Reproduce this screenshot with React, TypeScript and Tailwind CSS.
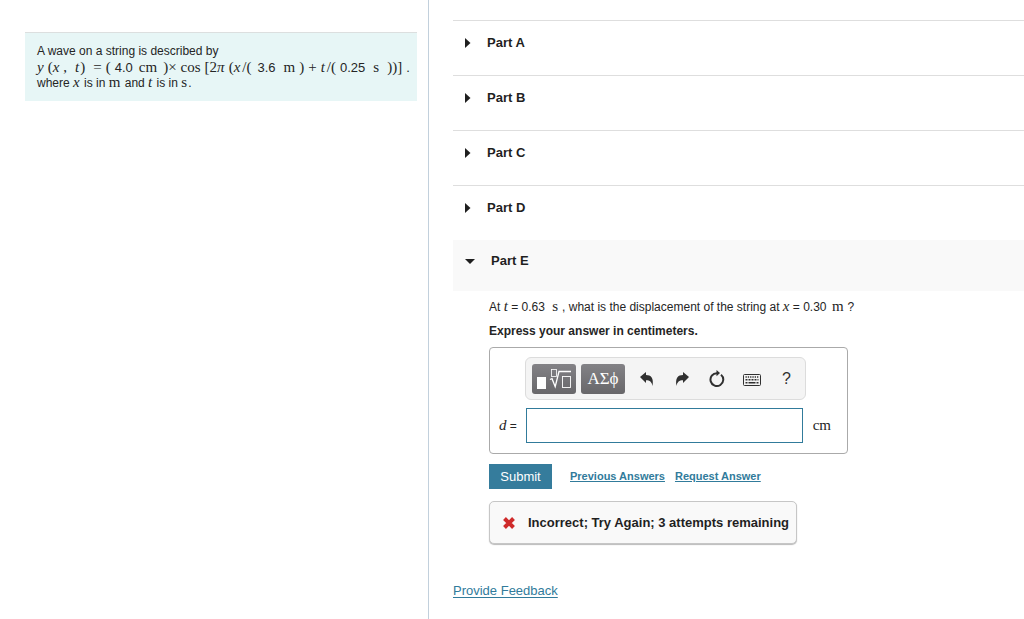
import React, { useState } from "react";

const serif = "font-['Liberation_Serif',serif] text-[15px] leading-none";

function M({ children, i = false, className = "" }: { children: React.ReactNode; i?: boolean; className?: string }) {
  return <span className={`${serif} ${i ? "italic" : ""} ${className}`}>{children}</span>;
}

function Problem() {
  return (
    <section className="border-t border-[#dcdfdf] bg-[#e7f6f6] px-3 pt-[11px] pb-3 text-[12px] text-[#252525]">
      <p className="leading-[14px]">A wave on a string is described by</p>
      <p className="h-[17px] text-[13px] leading-[19px] whitespace-nowrap">
        <M i className="mr-1">y</M>
        <M>(</M>
        <M i>x</M>
        <M className="mx-1">,</M>
        <M i className="ml-1">t</M>
        <M className="ml-px">)</M>
        <M className="mr-1 ml-2">=</M>
        <M>(</M>
        <span className="mx-1">4.0</span>
        <M className="mx-0.5">cm</M>
        <M className="ml-1">)</M>
        <M className="mr-1">×</M>
        <M className="mr-1">cos</M>
        <M>[2</M>
        <M i className="mr-1">π</M>
        <M>(</M>
        <M i>x</M>
        <M className="mx-0.5">/(</M>
        <span className="mx-1">3.6</span>
        <M className="mx-1">m</M>
        <M>)</M>
        <M className="mx-1">+</M>
        <M i>t</M>
        <M className="ml-0.5">/(</M>
        <span className="mx-1">0.25</span>
        <M className="mx-1">s</M>
        <M className="ml-1">))]</M>
        <span className="ml-1">.</span>
      </p>
      <p className="h-[14px] leading-[14px] whitespace-nowrap">
        where <M i className="mr-px">x</M> is in <M className="mr-px">m</M> and <M i className="mr-px">t</M> is in <M className="mr-px">s</M>.
      </p>
    </section>
  );
}

function PartRow({ name }: { name: string }) {
  return (
    <h2 className="h-[55px] border-t border-[#dedede]">
      <button type="button" aria-expanded="false" className="flex h-[43px] w-full items-center pl-3 text-left text-[13px] font-bold text-[#1f1f1f]">
        <svg aria-hidden="true" width="6" height="10" viewBox="0 0 6 10" className="mr-4 fill-[#1f1f1f]">
          <path d="M0 0l5.500 5L0 10z" />
        </svg>
        {name}
      </button>
    </h2>
  );
}

function TemplateIcon() {
  return (
    <svg aria-hidden="true" width="36" height="22" viewBox="0 0 36 22" fill="none" stroke="#fff">
      <rect x="1" y="9" width="9" height="12" fill="#fff" stroke="none" />
      <rect x="15.500" y="1.500" width="5" height="7" strokeWidth=".8" />
      <path d="M14 11.500l2-.8 3.200 8L23 3.500h12" strokeWidth="1.300" />
      <rect x="26.500" y="8.500" width="8" height="11" strokeWidth=".9" />
    </svg>
  );
}

function UndoIcon({ flip = false }: { flip?: boolean }) {
  return (
    <svg aria-hidden="true" width="14" height="14" viewBox="0 0 14 14" className={flip ? "-scale-x-100 fill-[#303030]" : "fill-[#303030]"}>
      <path d="M0 5L6 0v3C11 3 14 6 12.500 14c-.9-4-2.500-5.700-6.500-5.700V11z" />
    </svg>
  );
}

function ResetIcon() {
  return (
    <svg aria-hidden="true" width="16" height="18" viewBox="0 0 16 18">
      <path d="M12 4.700A6.400 6.400 0 1 1 8 3.200" fill="none" stroke="#303030" strokeWidth="2" />
      <path d="M7.500 0l3.500 3-3.500 3.200z" fill="#303030" />
    </svg>
  );
}

function KeyboardIcon() {
  return (
    <svg aria-hidden="true" width="18" height="12" viewBox="0 0 18 12" fill="none" stroke="#303030">
      <rect x=".5" y=".5" width="17" height="11" rx="1" />
      <path d="M2.500 3h13" strokeDasharray="1.300 1" strokeWidth="1.500" />
      <path d="M2.500 5.800h13" strokeDasharray="2 1" strokeWidth="1.500" />
      <path d="M2.500 8.800h2m1 0h7m1 0h2" strokeWidth="1.500" />
    </svg>
  );
}

const darkButton =
  "flex h-[30px] w-11 items-center justify-center rounded-[3px] bg-linear-to-b from-[#838286] to-[#68676a] text-white";
const toolButton = "flex h-[30px] w-[35px] items-center justify-center";

function AnswerBox() {
  const [value, setValue] = useState("");
  return (
    <div className="w-[359px] max-w-full rounded-[4px] border border-[#aaa] pt-[9px] pr-4 pb-[10px] pl-[9px]">
      <div role="toolbar" aria-label="Math tools" className="ml-[26px] flex h-[43px] w-[281px] items-center rounded-md border border-[#dcdcdc] bg-[#f4f4f4] pl-[6px]">
        <button type="button" aria-label="Templates" className={darkButton}><TemplateIcon /></button>
        <button type="button" aria-label="Symbols" className={`${darkButton} mr-1 ml-[5px] font-['Liberation_Serif',serif] text-[17px]`}>ΑΣϕ</button>
        <button type="button" aria-label="Undo" className={toolButton}><UndoIcon /></button>
        <button type="button" aria-label="Redo" className={toolButton}><UndoIcon flip /></button>
        <button type="button" aria-label="Reset" className={toolButton}><ResetIcon /></button>
        <button type="button" aria-label="Keyboard shortcuts" className={`${toolButton} pt-[3px]`}><KeyboardIcon /></button>
        <button type="button" aria-label="Help" className={`${toolButton} text-[16px] text-[#303030]`}>?</button>
      </div>
      <div className="mt-2 flex items-center text-[12px]">
        <label htmlFor="answer" className="w-[27px] whitespace-nowrap"><M i>d</M> =</label>
        <input
          id="answer"
          type="text"
          autoComplete="off"
          value={value}
          onChange={(e) => setValue(e.target.value)}
          className="h-[35px] w-[277px] border border-[#317b9b] bg-white px-2 text-[14px] outline-none"
        />
        <M className="ml-[10px]">cm</M>
      </div>
    </div>
  );
}

export default function App() {
  return (
    <div className="flex min-h-screen bg-white font-['Liberation_Sans',Arial,sans-serif] text-[#252525]">
      <aside className="w-[429px] shrink-0 border-r border-[#c2d0dc] pt-8 pr-[11px] pl-[25px]">
        <Problem />
      </aside>
      <main className="min-w-0 flex-1 pt-5 pl-6">
        <PartRow name="Part A" />
        <PartRow name="Part B" />
        <PartRow name="Part C" />
        <PartRow name="Part D" />
        <h2 className="h-[51px] bg-[#f9f9f9]">
          <button type="button" aria-expanded="true" className="flex h-[42px] w-full items-center pl-3 text-left text-[13px] font-bold text-[#1f1f1f]">
            <svg aria-hidden="true" width="10" height="5" viewBox="0 0 10 5" className="mr-4 fill-[#1f1f1f]">
              <path d="M0 0h10l-5 5z" />
            </svg>
            Part E
          </button>
        </h2>
        <div className="pl-9">
          <p className="mt-2 h-[18px] text-[12px] leading-[17px] whitespace-nowrap">
            At <M i>t</M> = 0.63 <M className="mx-1">s</M>, what is the displacement of the string at <M i>x</M> = 0.30 <M className="ml-0.5 mr-1">m</M>?
          </p>
          <p className="mt-[6px] mb-2 text-[12px] leading-4 font-bold">Express your answer in centimeters.</p>
          <AnswerBox />
          <div className="mt-[10px] flex h-[25px] items-center text-[11px] font-bold text-[#317b9b]">
            <button type="button" className="mr-[18px] h-full w-[63px] bg-[#357c9c] text-[13px] font-normal text-white">Submit</button>
            <a href="#previous" className="mr-[10px] underline underline-offset-1">Previous Answers</a>
            <a href="#request" className="underline underline-offset-1">Request Answer</a>
          </div>
          <div role="status" className="mt-3 flex h-[43px] w-[308px] items-center rounded-[5px] border border-[#c6c6c6] bg-[#f9f9f9] pl-3 text-[13px] font-bold whitespace-nowrap text-[#1f1f1f] shadow-[0_1px_1px_#bbb]">
            <svg aria-hidden="true" width="14" height="14" viewBox="0 0 14 14" className="mr-3 shrink-0">
              <path d="M2.500 2.500l9 9m0-9l-9 9" stroke="#cf2b2b" strokeWidth="4" />
            </svg>
            Incorrect; Try Again; 3 attempts remaining
          </div>
        </div>
        <a href="#feedback" className="mt-[37px] inline-block text-[13px] leading-5 text-[#317b9b] underline underline-offset-2">Provide Feedback</a>
      </main>
    </div>
  );
}
